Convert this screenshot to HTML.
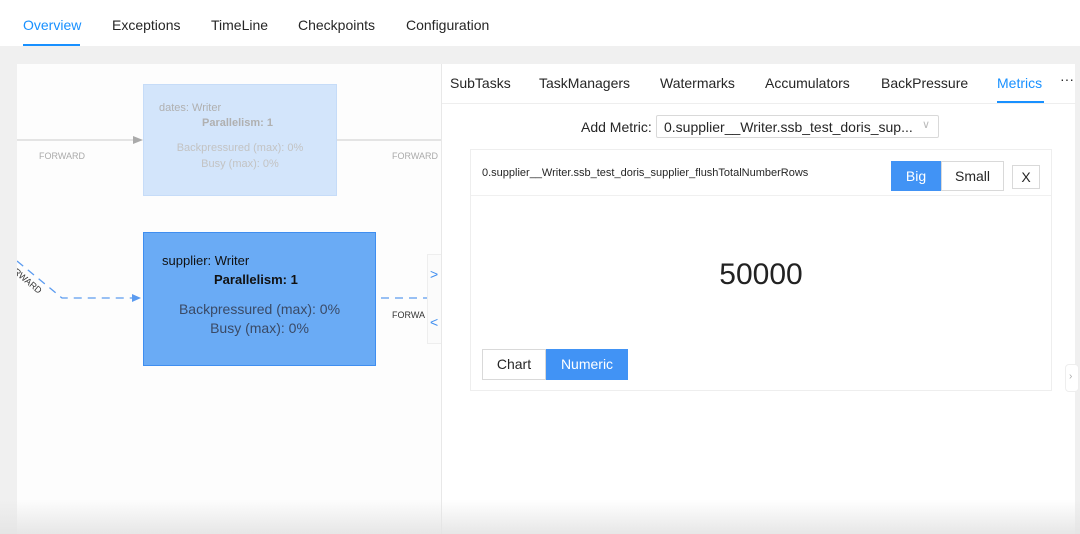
<!DOCTYPE html>
<html><head><style>
*{box-sizing:border-box;margin:0;padding:0}
body{width:1080px;height:534px;overflow:hidden;background:#f0f0f0;font-family:"Liberation Sans",Arial,sans-serif;position:relative;color:#262626}
.nav{position:absolute;left:0;top:0;width:1080px;height:46px;background:#fff}
.nav span{position:absolute;top:17px;font-size:14px;color:#262626}
.abs{position:absolute}
.left{position:absolute;left:17px;top:64px;width:424px;height:470px;background:#fdfdfd;overflow:hidden}
.right{position:absolute;left:441px;top:64px;width:634px;height:470px;background:#fff;border-left:1px solid #e8e8e8}
.tab{position:absolute;top:11px;font-size:14px;color:#262626}
</style></head><body>
<div class="nav">
<span style="left:23px;color:#1890ff">Overview</span>
<span style="left:112px">Exceptions</span>
<span style="left:211px">TimeLine</span>
<span style="left:298px">Checkpoints</span>
<span style="left:406px">Configuration</span>
<div class="abs" style="left:23px;top:44px;width:57px;height:2px;background:#1890ff"></div>
</div>
<div class="left">
<svg class="abs" style="left:0;top:0" width="424" height="470">
<line x1="0" y1="76" x2="125" y2="76" stroke="#ccc"/>
<path d="M116 72 L126 76 L116 80Z" fill="#aaa"/>
<line x1="320" y1="76" x2="424" y2="76" stroke="#ccc"/>
<path d="M0 197 L45 234 L118 234" stroke="#5b9bf0" stroke-width="1.3" fill="none" stroke-dasharray="8 6"/>
<path d="M115 230 L124 234 L115 238Z" fill="#5b9bf0"/>
<path d="M364 234 L424 234" stroke="#5b9bf0" stroke-width="1.3" fill="none" stroke-dasharray="8 6"/>
</svg>
<div class="abs" style="left:22px;top:87px;font-size:9px;color:#aaa">FORWARD</div>
<div class="abs" style="left:375px;top:87px;font-size:9px;color:#aaa">FORWARD</div>
<div class="abs" style="left:-6px;top:212px;font-size:9px;color:#333;transform:rotate(40deg)">RWARD</div>
<div class="abs" style="left:375px;top:246px;font-size:9px;color:#333">FORWA</div>
<div class="abs" style="left:126px;top:20px;width:194px;height:112px;background:#d3e5fb;border:1px solid #c6dcf8;color:#b0b0b0;font-size:11px">
<div class="abs" style="left:15px;top:17px">dates: Writer</div>
<div class="abs" style="left:58px;top:32px;font-weight:bold">Parallelism: 1</div>
<div class="abs" style="left:0;width:100%;top:57px;text-align:center;color:#c3c3c3">Backpressured (max): 0%</div>
<div class="abs" style="left:0;width:100%;top:73px;text-align:center;color:#c3c3c3">Busy (max): 0%</div>
</div>
<div class="abs" style="left:126px;top:168px;width:233px;height:134px;background:#6aabf5;border:1px solid #3f8ef0;font-size:13px">
<div class="abs" style="left:18px;top:20px;color:#111">supplier: Writer</div>
<div class="abs" style="left:70px;top:39px;font-weight:bold;color:#111">Parallelism: 1</div>
<div class="abs" style="left:0;width:100%;top:68px;text-align:center;color:#3a4a66;font-size:14px">Backpressured (max): 0%</div>
<div class="abs" style="left:0;width:100%;top:87px;text-align:center;color:#3a4a66;font-size:14px">Busy (max): 0%</div>
</div>
<div class="abs" style="left:410px;top:190px;width:14px;height:90px;background:#fbfbfb;border:1px solid #eee;border-right:none"></div>
<div class="abs" style="left:413px;top:202px;color:#3f8ef0;font-size:14px">&gt;</div>
<div class="abs" style="left:413px;top:250px;color:#3f8ef0;font-size:14px">&lt;</div>
</div>
<div class="right">
<div class="abs" style="left:0;top:0;width:634px;height:40px;border-bottom:1px solid #eee"></div>
<div class="tab" style="left:8px">SubTasks</div>
<div class="tab" style="left:97px">TaskManagers</div>
<div class="tab" style="left:218px">Watermarks</div>
<div class="tab" style="left:323px">Accumulators</div>
<div class="tab" style="left:439px">BackPressure</div>
<div class="tab" style="left:555px;color:#1890ff">Metrics</div>
<div class="abs" style="left:555px;top:37px;width:47px;height:2px;background:#1890ff"></div>
<div class="tab" style="left:618px;top:7px">···</div>
<div class="abs" style="left:139px;top:55px;font-size:14px">Add Metric:</div>
<div class="abs" style="left:214px;top:51px;width:283px;height:23px;border:1px solid #d9d9d9;border-radius:2px;font-size:14px;padding:3px 7px">0.supplier__Writer.ssb_test_doris_sup...<span style="position:absolute;right:8px;top:2px;color:#bbb;font-size:11px">∨</span></div>
<div class="abs" style="left:28px;top:85px;width:582px;height:242px;border:1px solid #eee">
<div class="abs" style="left:0;top:0;width:580px;height:46px;border-bottom:1px solid #f0f0f0"></div>
<div class="abs" style="left:11px;top:17px;font-size:11px">0.supplier__Writer.ssb_test_doris_supplier_flushTotalNumberRows</div>
<div class="abs" style="left:420px;top:11px;width:50px;height:30px;background:#4193f5;color:#fff;font-size:14px;text-align:center;line-height:30px">Big</div>
<div class="abs" style="left:470px;top:11px;width:63px;height:30px;border:1px solid #d9d9d9;font-size:14px;text-align:center;line-height:28px">Small</div>
<div class="abs" style="left:541px;top:15px;width:28px;height:24px;border:1px solid #d9d9d9;font-size:14px;text-align:center;line-height:22px">X</div>
<div class="abs" style="left:0;width:100%;top:108px;text-align:center;font-size:30px;color:#222">50000</div>
<div class="abs" style="left:11px;top:199px;width:64px;height:31px;border:1px solid #d9d9d9;font-size:14px;text-align:center;line-height:29px">Chart</div>
<div class="abs" style="left:75px;top:199px;width:82px;height:31px;background:#4193f5;color:#fff;font-size:14px;text-align:center;line-height:31px">Numeric</div>
</div>
<div class="abs" style="left:623px;top:300px;width:14px;height:28px;border:1px solid #eee;border-radius:4px;background:#fff;color:#aaa;font-size:10px;padding:6px 3px">›</div>
</div>
<div class="abs" style="left:0;top:500px;width:1080px;height:34px;background:linear-gradient(rgba(235,235,235,0),rgba(228,228,228,0.9))"></div>
</body></html>
